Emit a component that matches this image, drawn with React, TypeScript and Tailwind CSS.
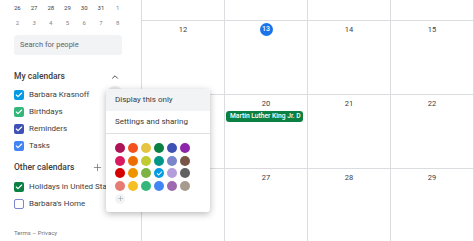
import { ChevronUp, Plus, Check } from "lucide-react";

const miniRows = [
    [
        { d: "26", muted: false },
        { d: "27", muted: false },
        { d: "28", muted: false },
        { d: "29", muted: false },
        { d: "30", muted: false },
        { d: "31", muted: false },
        { d: "1", muted: true },
    ],
    ["2", "3", "4", "5", "6", "7", "8"].map((d) => ({ d, muted: true })),
];

const myCalendars = [
    { name: "Barbara Krasnoff", color: "bg-[#039be5]" },
    { name: "Birthdays", color: "bg-[#33b679]" },
    { name: "Reminders", color: "bg-[#3f51b5]" },
    { name: "Tasks", color: "bg-[#4285f4]" },
];

const palette = [
    ["#ad1457", "#f4511e", "#e4c441", "#0b8043", "#3f51b5", "#8e24aa"],
    ["#d81b60", "#ef6c00", "#c0ca33", "#009688", "#7986cb", "#795548"],
    ["#d50000", "#f09300", "#7cb342", "#039be5", "#b39ddb", "#616161"],
    ["#e67c73", "#f6bf26", "#33b679", "#4285f4", "#9e69af", "#a79b8e"],
];

const weeks = [
    ["", "", "", "", ""],
    ["12", "13", "14", "15", ""],
    ["19", "20", "21", "22", ""],
    ["26", "27", "28", "29", ""],
];

function CheckBox({ color }: { color: string }) {
    return (
        <span
            className={`flex h-[10px] w-[10px] shrink-0 items-center justify-center rounded-[2px] ${color}`}
        >
            <Check size={8} strokeWidth={3.5} className="text-white" />
        </span>
    );
}

function CalendarRow({ name, color }: { name: string; color: string }) {
    return (
        <div className="flex h-[17px] items-center gap-[5px] pl-[14px] whitespace-nowrap">
            <CheckBox color={color} />
            <span className="text-[8px] text-[#3c4043]">{name}</span>
        </div>
    );
}

function Sidebar() {
    return (
        <div className="relative flex w-[141px] shrink-0 flex-col overflow-hidden">
            <div className="grid grid-cols-7 pl-[9px] pr-[15px]">
                {miniRows.map((row, i) =>
                    row.map((c) => (
                        <span
                            key={`${i}-${c.d}`}
                            className={`flex h-[15px] items-center justify-center text-[6px] ${
                                c.muted ? "text-[#80868b]" : "text-[#3c4043]"
                            }`}
                        >
                            {c.d}
                        </span>
                    ))
                )}
            </div>
            <div className="ml-[14px] mt-[5px] flex h-[20px] w-[108px] items-center rounded-[3px] bg-[#f1f3f4] pl-[6px] text-[7.5px] text-[#5f6368]">
                Search for people
            </div>
            <div className="mt-[13px] flex h-[17px] items-center justify-between pl-[14px] pr-[21px]">
                <span className="text-[8.5px] font-medium text-[#3c4043]">
                    My calendars
                </span>
                <ChevronUp size={10} strokeWidth={2.2} className="text-[#3c4043]" />
            </div>
            <div className="mt-[1px] flex flex-col">
                {myCalendars.map((c) => (
                    <CalendarRow key={c.name} name={c.name} color={c.color} />
                ))}
            </div>
            <div className="mt-[5px] flex h-[17px] items-center justify-between pl-[14px] pr-[38px]">
                <span className="text-[8.5px] font-medium text-[#3c4043]">
                    Other calendars
                </span>
                <Plus size={11} strokeWidth={1.5} className="text-[#5f6368]" />
            </div>
            <div className="mt-[2px] flex flex-col">
                <CalendarRow name="Holidays in United States" color="bg-[#0b8043]" />
                <div className="flex h-[17px] items-center gap-[5px] pl-[14px] whitespace-nowrap">
                    <span className="h-[10px] w-[10px] shrink-0 rounded-[2px] border-[1.5px] border-[#7986cb] bg-white" />
                    <span className="text-[8px] text-[#3c4043]">Barbara's Home</span>
                </div>
            </div>
            <div className="mt-[16px] pl-[14px] text-[6px] text-[#70757a]">
                Terms – Privacy
            </div>
            <span className="absolute left-[107px] top-[86px] h-[16px] w-[16px] rounded-full bg-[#e8eaed]" />
        </div>
    );
}

function MonthGrid() {
    return (
        <div className="flex flex-1 flex-col overflow-hidden">
            {weeks.map((week, wi) => (
                <div
                    key={wi}
                    className={`flex ${wi === 0 ? "h-[20px]" : "h-[74px] border-t border-[#dadce0]"} ${
                        wi === 3 ? "flex-1" : ""
                    }`}
                >
                    {week.map((day, di) => (
                        <div
                            key={di}
                            className="flex w-[83px] shrink-0 flex-col border-l border-[#dadce0] pt-[2px]"
                        >
                            {day && (
                                <div className="flex h-[13px] items-center justify-center">
                                    {day === "13" ? (
                                        <span className="flex h-[13px] w-[13px] items-center justify-center rounded-full bg-[#1a73e8] text-[7px] font-medium text-white">
                                            13
                                        </span>
                                    ) : (
                                        <span className="text-[7.5px] text-[#3c4043]">{day}</span>
                                    )}
                                </div>
                            )}
                            {day === "20" && (
                                <div className="ml-[1px] mr-[4px] mt-[1px] flex h-[11px] items-center whitespace-nowrap rounded-[3px] bg-[#0b8043] pl-[4px] text-[6.7px] font-medium text-white">
                                    Martin Luther King Jr. D
                                </div>
                            )}
                        </div>
                    ))}
                </div>
            ))}
        </div>
    );
}

function ColorMenu() {
    return (
        <div className="absolute left-[106px] top-[89px] w-[104px] rounded-[3px] bg-white pb-[8px] shadow-[0_2px_7px_rgba(0,0,0,0.28)]">
            <div className="flex h-[22px] items-center rounded-t-[3px] bg-[#f1f3f4] pl-[9px] text-[8px] text-[#3c4043]">
                Display this only
            </div>
            <div className="flex h-[22px] items-center pl-[9px] text-[8px] text-[#3c4043]">
                Settings and sharing
            </div>
            <div className="h-px bg-[#e0e0e0]" />
            <div className="flex flex-col gap-[2.7px] pl-[9px] pt-[9px]">
                {palette.map((row, ri) => (
                    <div key={ri} className="flex gap-[3px]">
                        {row.map((c) => (
                            <span
                                key={c}
                                className="flex h-[10px] w-[10px] items-center justify-center rounded-full"
                                style={{ backgroundColor: c }}
                            >
                                {c === "#039be5" && (
                                    <Check size={7} strokeWidth={3.5} className="text-white" />
                                )}
                            </span>
                        ))}
                    </div>
                ))}
                <span className="flex h-[10px] w-[10px] items-center justify-center rounded-full bg-[#f1f3f4]">
                    <Plus size={7} strokeWidth={2} className="text-[#9aa0a6]" />
                </span>
            </div>
        </div>
    );
}

export default function App() {
    return (
        <div className="relative flex h-[241px] w-[474px] overflow-hidden bg-white font-['Roboto',sans-serif]">
            <Sidebar />
            <MonthGrid />
            <ColorMenu />
        </div>
    );
}
